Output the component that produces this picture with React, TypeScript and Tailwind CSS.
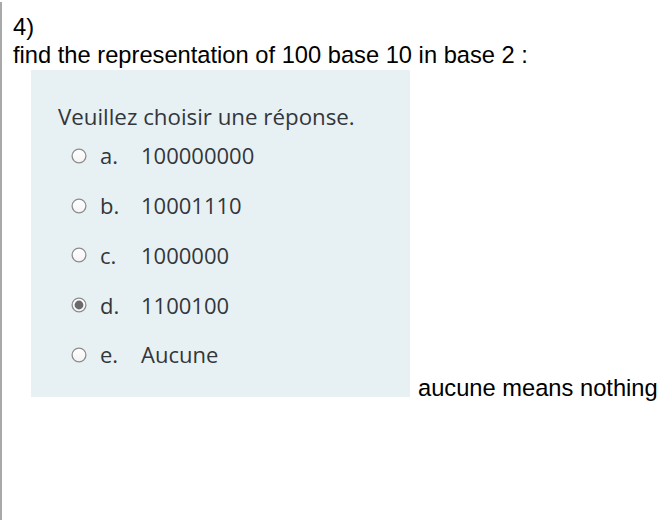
import React from "react";

const options = [
  { l: "a.", v: "100000000", checked: false },
  { l: "b.", v: "10001110", checked: false },
  { l: "c.", v: "1000000", checked: false },
  { l: "d.", v: "1100100", checked: true },
  { l: "e.", v: "Aucune", checked: false },
];

function Radio({ checked }: { checked: boolean }) {
  return (
    <svg width="16" height="16" viewBox="0 0 16 16" className="shrink-0">
      <defs>
        <linearGradient id="rg" x1="0" y1="0" x2="0" y2="1">
          <stop offset="0" stopColor="#ffffff" />
          <stop offset="1" stopColor="#f4f4f4" />
        </linearGradient>
      </defs>
      <circle cx="8" cy="8" r="6.9" fill="url(#rg)" stroke="#8c8c8c" strokeWidth="1.3" />
      {checked && <circle cx="8" cy="8" r="4.4" fill="#6a6a6a" />}
    </svg>
  );
}

export default function App() {
  return (
    <div className="w-[658px] h-[520px] bg-white overflow-hidden flex">
      <div className="w-[2px] bg-[#a9a9a9] mt-[2px] shrink-0" />
      <div className="flex-1 flex flex-col">
        <div
          className="pl-[11px] pt-[13px] text-[23.7px] leading-[28px] text-black"
          style={{ fontFamily: '"Liberation Sans", Arial, sans-serif' }}
        >
          <div>4)</div>
          <div>find the representation of 100 base 10 in base 2 :</div>
        </div>
        <div className="flex items-end mt-[1px] pl-[29px]">
          <div
            className="w-[379px] h-[327px] bg-[#e7f1f4] pt-[33px] pl-[27px] text-[#33363a] shrink-0"
            style={{ fontFamily: '"Open Sans", sans-serif' }}
          >
            <div className="text-[22.3px] leading-[28px]">Veuillez choisir une réponse.</div>
            <div className="flex flex-col">
              {options.map((o) => (
                <div key={o.l} className="h-[49.75px] flex items-center pl-[13px] text-[22px]">
                  <Radio checked={o.checked} />
                  <span className="ml-[13px] w-[41px]">{o.l}</span>
                  <span>{o.v}</span>
                </div>
              ))}
            </div>
          </div>
          <div
            className="ml-[8px] text-[23.7px] leading-none text-black mb-[-4px] whitespace-nowrap"
            style={{ fontFamily: '"Liberation Sans", Arial, sans-serif' }}
          >
            aucune means nothing
          </div>
        </div>
      </div>
    </div>
  );
}
